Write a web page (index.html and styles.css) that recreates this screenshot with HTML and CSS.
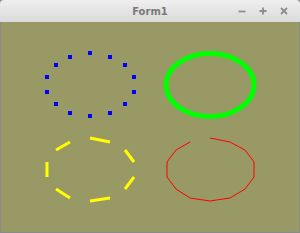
FILE: index.html
```html
<!DOCTYPE html>
<html lang="en">
<head>
    <meta charset="UTF-8">
    <title>Form1</title>
    <link rel="stylesheet" href="styles.css">
</head>
<body>
    <div class="window">
        <div class="title-bar">
            <span></span>
            <span class="title">Form1</span>
            <div class="title-buttons">
                <svg width="8" height="8" viewBox="0 0 8 8"><path d="M0.5 4.5h7" /></svg>
                <svg width="8" height="8" viewBox="0 0 8 8"><path d="M0.5 4h7M4 0.5v7" /></svg>
                <svg width="8" height="8" viewBox="0 0 8 8"><path d="M1 1l6 6M7 1l-6 6" /></svg>
            </div>
        </div>

        <!-- drawing area, coordinates are page pixels -->
        <svg class="canvas" width="298" height="210" viewBox="1 22 298 210">
            <g fill="#0000ff">
                <rect x="88" y="51" width="4" height="4" />
                <rect x="108" y="55" width="4" height="4" />
                <rect x="123" y="63" width="4" height="4" />
                <rect x="132" y="75" width="4" height="4" />
                <rect x="132" y="90" width="4" height="4" />
                <rect x="123" y="102" width="4" height="4" />
                <rect x="108" y="111" width="4" height="4" />
                <rect x="88" y="114" width="4" height="4" />
                <rect x="68" y="111" width="4" height="4" />
                <rect x="54" y="102" width="4" height="4" />
                <rect x="45" y="90" width="4" height="4" />
                <rect x="45" y="75" width="4" height="4" />
                <rect x="54" y="63" width="4" height="4" />
                <rect x="68" y="55" width="4" height="4" />
            </g>

            <ellipse cx="210" cy="85" rx="44" ry="31.5" fill="none" stroke="#00ff00" stroke-width="5" />

            <g stroke="#ffff00" stroke-width="3" fill="none">
                <line x1="90" y1="138" x2="110" y2="142" />
                <line x1="125" y1="150" x2="134" y2="162" />
                <line x1="134" y1="177" x2="125" y2="189" />
                <line x1="110" y1="198" x2="90" y2="201" />
                <line x1="70" y1="198" x2="56" y2="189" />
                <line x1="47" y1="177" x2="47" y2="162" />
                <line x1="56" y1="150" x2="70" y2="142" />
            </g>

            <polyline fill="none" stroke="#ff0000" stroke-width="1"
                points="210,138 230,142 245,150 254,162 254,177 245,189 230,198 210,201 190,198 176,189 167,177 167,162 176,150 190,142" />
        </svg>
    </div>
</body>
</html>
```

FILE: styles.css
```css
body {
    margin: 0;
    background-color: #8b8b8b;
    font-family: "DejaVu Sans", sans-serif;
}

.window {
    width: 298px;
    border: 1px solid #8b8b8b;
    border-top: none;
    display: flex;
    flex-direction: column;
}

.title-bar {
    height: 22px;
    display: grid;
    grid-template-columns: 1fr auto 1fr;
    align-items: center;
    background: linear-gradient(#efefef, #dadada);
    border-radius: 4px 4px 0 0;
    margin: 0 -1px;
}

.title {
    font-size: 10px;
    font-weight: bold;
    color: #7a7a7a;
    padding-top: 1px;
}

.title-buttons {
    display: flex;
    justify-content: flex-end;
    gap: 13px;
    padding-right: 12px;
}

.title-buttons svg {
    stroke: #8d8d8d;
    stroke-width: 1.8;
    fill: none;
}

.canvas {
    display: block;
    background-color: #999966;
}
```
